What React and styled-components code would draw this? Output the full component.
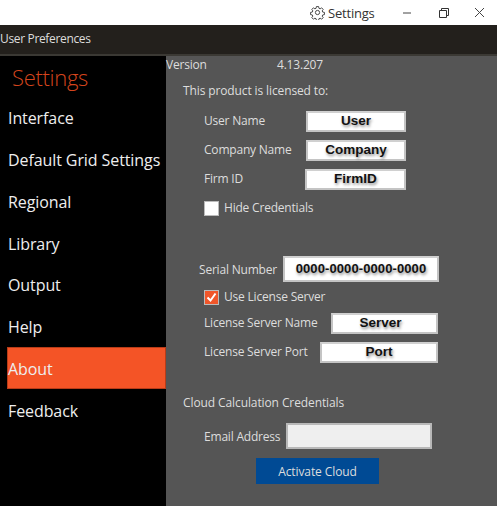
import React from "react";
import styled, { createGlobalStyle } from "styled-components";

const Global = createGlobalStyle`
  html, body { margin: 0; padding: 0; background: #555; }
  body { font-family: "Open Sans", "Noto Sans", "Liberation Sans", sans-serif; overflow: hidden; }
`;
const Page = styled.div`
  width: 497px; height: 506px; display: flex; flex-direction: column; overflow: hidden;
`;
const TitleBar = styled.div`
  height: 25px; background: #fff; display: flex; align-items: center; color: #333; flex: none;
`;
const TitleGroup = styled.div`
  margin-left: 310px; display: flex; align-items: center; gap: 3px;
  font-size: 13px; letter-spacing: -0.2px; width: 88px;
`;
const WindowButton = styled.div`
  width: 39px; height: 25px; display: flex; align-items: center; justify-content: center;
`;
const AppBar = styled.div`
  height: 29px; background: #23201c; border-bottom: 2px solid #3b3934; color: #ddd; flex: none;
  font-size: 12px; line-height: 28px; letter-spacing: -0.34px;
`;
const Body = styled.div`
  flex: 1; display: flex; min-height: 0;
`;
const Sidebar = styled.nav`
  width: 166px; flex: none; background: #000; display: flex; flex-direction: column;
`;
const Heading = styled.div`
  color: #d4451d; font-size: 22px; line-height: 30px; padding: 6px 0 0 12px; height: 30px;
  font-weight: 300; letter-spacing: -0.3px; margin-bottom: 4px;
`;
const NavItem = styled.div`
  box-sizing: border-box; height: 41.86px; margin-left: 7px; padding: 2px 0 0 1px; display: flex; align-items: center;
  font-size: 16px; letter-spacing: -0.09px; white-space: nowrap; color: #eee;
  background: ${p => (p.$active ? "#f45426" : "transparent")};
  box-shadow: ${p => (p.$active ? "inset 0 0 0 1px #b83c18" : "none")};
`;
const Content = styled.main`
  flex: 1; background: #555; color: #ddd; font-size: 12px; letter-spacing: -0.2px; display: flex; flex-direction: column;
`;
const Row = styled.div`
  display: flex; align-items: center; white-space: nowrap;
  height: ${p => p.$h}px; margin-top: ${p => p.$top || 0}px; padding-left: ${p => p.$left}px;
`;
const Label = styled.span`
  width: ${p => (p.$w ? `${p.$w}px` : "auto")}; flex: none; padding-bottom: ${p => p.$pb ?? 2}px;
  letter-spacing: ${p => p.$ls || "inherit"};
`;
const Field = styled.div`
  box-sizing: border-box; width: ${p => p.$w}px; height: ${p => p.$h || 21}px; flex: none;
  background: #fff; border: 2px solid #c4c4c4; border-top-color: #d0d0d0;
  display: flex; align-items: center; justify-content: center;
  color: #111; font-family: "Liberation Sans", Arial, sans-serif; font-weight: 700; font-size: ${p => p.$fs || 13.5}px;
  letter-spacing: ${p => p.$ls || 0}; padding: 0 ${p => p.$shift || 0}px 2px 0;
  text-shadow: 1px 2px 3px rgba(0,0,0,.45);
`;
const EmptyField = styled(Field)`
  background: #efefef; border-color: #b8b8b8;
`;
const Box = styled.span`
  box-sizing: border-box; width: 15px; height: 15px; flex: none; margin-right: 5px;
  background: ${p => (p.$on ? "#f0562a" : "#fff")}; border: 1px solid #bbb;
  display: flex; align-items: center; justify-content: center;
`;
const ActionRow = styled.div`
  margin: 9px 0 0 90px;
`;
const Button = styled.button`
  display: block; width: 123px; height: 26px; padding: 0; border: 0; background: #004a94; color: #ddd;
  font: inherit; font-size: 12px; letter-spacing: -0.1px;
`;

const items = ["Interface", "Default Grid Settings", "Regional", "Library", "Output", "Help", "About", "Feedback"];

export default function App() {
  return (
    <Page>
      <Global />
      <TitleBar>
        <TitleGroup>
          <svg width="15" height="15" viewBox="0 0 24 24" fill="none" stroke="#333" strokeWidth="1.4">
            <circle cx="12" cy="12" r="3.4" />
            <path d="M10.2 2.5h3.6l.5 2.8 1.9.8 2.4-1.6 2.5 2.5-1.6 2.4.8 1.9 2.8.5v3.6l-2.8.5-.8 1.9 1.6 2.4-2.5 2.5-2.4-1.6-1.9.8-.5 2.8h-3.6l-.5-2.8-1.9-.8-2.4 1.6-2.5-2.5 1.6-2.4-.8-1.9-2.8-.5v-3.6l2.8-.5.8-1.9-1.6-2.4 2.5-2.5 2.4 1.6 1.9-.8z" />
          </svg>
          Settings
        </TitleGroup>
        <WindowButton>
          <svg width="10" height="10" viewBox="0 0 10 10"><path d="M0 5h8" stroke="#444" /></svg>
        </WindowButton>
        <WindowButton>
          <svg width="10" height="10" viewBox="0 0 10 10" fill="none" stroke="#333"><path d="M.5 2.5h7v7h-7zM2.5 2.5v-2h7v7h-2" /></svg>
        </WindowButton>
        <WindowButton>
          <svg width="11" height="11" viewBox="0 0 11 11"><path d="M1 1l9 9M10 1l-9 9" stroke="#444" /></svg>
        </WindowButton>
      </TitleBar>
      <AppBar>User Preferences</AppBar>
      <Body>
        <Sidebar>
          <Heading>Settings</Heading>
          {items.map(t => <NavItem key={t} $active={t === "About"}>{t}</NavItem>)}
        </Sidebar>
        <Content>
          <Row $h={18} $left={0}><Label $w={111}>Version</Label><Label>4.13.207</Label></Row>
          <Row $h={18} $top={8} $left={17}><Label $ls="-0.12px">This product is licensed to:</Label></Row>
          <Row $h={21} $top={11} $left={38}><Label $w={102}>User Name</Label><Field $w={100}>User</Field></Row>
          <Row $h={21} $top={8} $left={38}><Label $w={102}>Company Name</Label><Field $w={100}>Company</Field></Row>
          <Row $h={21} $top={8} $left={38}><Label $w={101}>Firm ID</Label><Field $w={101}>FirmID</Field></Row>
          <Row $h={18} $top={9} $left={38}><Box /><Label>Hide Credentials</Label></Row>
          <Row $h={26} $top={39} $left={33}><Label $w={84} $pb={0}>Serial Number</Label><Field $w={156} $h={26} $fs={13} $ls="0.1px">0000-0000-0000-0000</Field></Row>
          <Row $h={18} $top={6} $left={38}>
            <Box $on>
              <svg width="11" height="11" viewBox="0 0 11 11" fill="none" stroke="#fff" strokeWidth="2"><path d="M1.5 5.5l3 3 5-7" /></svg>
            </Box>
            <Label>Use License Server</Label>
          </Row>
          <Row $h={21} $top={7} $left={38}><Label $w={127}>License Server Name</Label><Field $w={107} $shift={8}>Server</Field></Row>
          <Row $h={21} $top={8} $left={38}><Label $w={116}>License Server Port</Label><Field $w={118}>Port</Field></Row>
          <Row $h={18} $top={30} $left={17}><Label $ls="-0.1px" $pb={0}>Cloud Calculation Credentials</Label></Row>
          <Row $h={26} $top={12} $left={38}><Label $w={82} $pb={0}>Email Address</Label><EmptyField $w={146} $h={26} /></Row>
          <ActionRow><Button>Activate Cloud</Button></ActionRow>
        </Content>
      </Body>
    </Page>
  );
}
